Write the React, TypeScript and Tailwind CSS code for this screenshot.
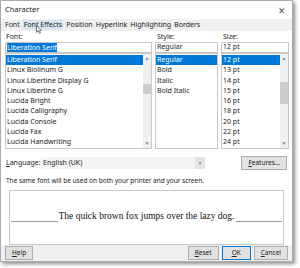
const fonts = [
  "Liberation Serif",
  "Linux Biolinum G",
  "Linux Libertine Display G",
  "Linux Libertine G",
  "Lucida Bright",
  "Lucida Calligraphy",
  "Lucida Console",
  "Lucida Fax",
  "Lucida Handwriting",
  "Lucida Sans",
];
const styles = ["Regular", "Bold", "Italic", "Bold Italic"];
const sizes = ["12 pt", "13 pt", "14 pt", "15 pt", "16 pt", "18 pt", "20 pt", "22 pt", "24 pt", "26 pt"];

function ScrollBar({ thumbTop, thumbH }: { thumbTop: number; thumbH: number }) {
  return (
    <div className="relative flex w-[8px] shrink-0 flex-col items-center justify-between bg-[#f0f0f0] py-[2px] text-[5px] leading-none text-[#888]">
      <span>▲</span>
      <div
        className="absolute left-0 w-[8px] bg-[#cdcdcd]"
        style={{ top: thumbTop, height: thumbH }}
      />
      <span>▼</span>
    </div>
  );
}

function ListBox({
  items,
  width,
  scroll,
}: {
  items: string[];
  width: string;
  scroll?: { top: number; h: number };
}) {
  return (
    <div className={`flex h-[96px] overflow-hidden border border-[#c8c8c8] bg-white ${width}`}>
      <div className="flex min-w-0 flex-1 flex-col pt-[1px]">
        {items.map((it, i) => (
          <div
            key={it}
            className={`h-[10.3px] shrink-0 whitespace-nowrap pl-[1px] leading-[10px] ${
              i === 0 ? "bg-[#0078d7] text-white" : "text-[#222]"
            }`}
          >
            {it}
          </div>
        ))}
      </div>
      {scroll && <ScrollBar thumbTop={scroll.top} thumbH={scroll.h} />}
    </div>
  );
}

function Btn({ children, focus }: { children: React.ReactNode; focus?: boolean }) {
  return (
    <div
      className={`flex h-[14px] items-center justify-center border bg-[#e1e1e1] px-[6px] text-[6.5px] leading-[10px] text-[#222] ${
        focus ? "border-[#0078d7]" : "border-[#adadad]"
      }`}
    >
      {children}
    </div>
  );
}

export default function App() {
  return (
    <div
      className="h-[268px] w-[300px] overflow-hidden bg-white"
      style={{ fontFamily: '"Noto Sans", "Open Sans", sans-serif' }}
    >
      <div className="flex h-[262px] w-[293px] flex-col overflow-hidden border border-[#aaa] bg-white text-[7px] shadow-[2px_2px_4px_rgba(0,0,0,0.45)]">
        {/* title */}
        <div className="flex h-[18px] shrink-0 items-center justify-between pl-[4px] pr-[6px] text-[7.5px] text-[#222]">
          <span>Character</span>
          <span className="text-[9px] leading-none text-[#555]">✕</span>
        </div>
        {/* tabs */}
        <div className="flex h-[12px] shrink-0 items-center gap-[3px] bg-[#f0f0f0] pl-[4px] text-[7px] text-[#222]">
          <span>Font</span>
          <span className="relative bg-[#d8e6f2] px-[1px]">
            Font Effects
            <svg
              className="absolute left-[13px] top-[5px]"
              width="6"
              height="9"
              viewBox="0 0 6 9"
            >
              <path d="M0.5 0.5 L0.5 7.5 L2.2 5.8 L3.4 8.5 L4.4 8 L3.3 5.4 L5.5 5.4 Z" fill="#fff" stroke="#333" strokeWidth="0.6" />
            </svg>
          </span>
          <span>Position</span>
          <span>Hyperlink</span>
          <span>Highlighting</span>
          <span>Borders</span>
        </div>
        {/* page */}
        <div className="flex h-[214px] shrink-0 flex-col px-[4px] pt-[1px]">
          <div className="flex gap-[3px]">
            <div className="flex flex-col">
              <div className="h-[10px] pl-[1px] leading-[10px] text-[#222]">Font:</div>
              <div className="flex h-[11px] w-[147px] items-center border border-[#c8c8c8] bg-white pl-[1px]">
                <span className="bg-[#0078d7] leading-[9px] text-white">Liberation Serif</span>
              </div>
              <ListBox items={fonts} width="w-[147px]" scroll={{ top: 30, h: 10 }} />
            </div>
            <div className="flex flex-col">
              <div className="h-[10px] pl-[2px] leading-[10px] text-[#222]">Style:</div>
              <div className="flex h-[11px] w-[63px] items-center border border-[#c8c8c8] bg-white pl-[1px] text-[#222]">
                Regular
              </div>
              <ListBox items={styles} width="w-[63px]" />
            </div>
            <div className="flex flex-col">
              <div className="h-[10px] pl-[2px] leading-[10px] text-[#222]">Size:</div>
              <div className="flex h-[11px] w-[68px] items-center border border-[#c8c8c8] bg-white pl-[1px] text-[#222]">
                12 pt
              </div>
              <ListBox items={sizes} width="w-[68px]" scroll={{ top: 28, h: 22 }} />
            </div>
          </div>
          {/* language */}
          <div className="mt-[7px] flex h-[14px] items-center">
            <span className="w-[36px] pl-[1px] leading-[10px] text-[#222]">
              <span className="underline">L</span>anguage:
            </span>
            <div className="flex h-[12px] w-[164px] items-center justify-between bg-[#f4f4f4] pl-[2px] leading-[10px] text-[#222]">
              <span>English (UK)</span>
              <span className="flex h-[12px] w-[10px] items-center justify-center bg-[#e5e5e5] text-[5px] text-[#888]">
                ▼
              </span>
            </div>
            <div className="ml-auto mr-[1px]">
              <Btn>
                <span className="underline">F</span>eatures...
              </Btn>
            </div>
          </div>
          <div className="mt-[6px] h-[10px] pl-[1px] text-[6.5px] leading-[10px] text-[#222]">
            The same font will be used on both your printer and your screen.
          </div>
          {/* preview */}
          <div className="mx-[4px] mt-[4px] flex h-[55px] items-center border border-[#c8c8c8] bg-white">
            <div className="flex w-full items-end gap-[1px] px-[1px] pb-[2px]">
              <div className="mb-[2px] h-px flex-1 bg-[#999]" />
              <span
                className="whitespace-nowrap text-[9.5px] text-[#111]"
                style={{ fontFamily: '"Liberation Serif", serif' }}
              >
                The quick brown fox jumps over the lazy dog.
              </span>
              <div className="mb-[2px] h-px flex-1 bg-[#999]" />
            </div>
          </div>
        </div>
        {/* buttons */}
        <div className="flex h-[16px] shrink-0 items-start gap-[3px] bg-[#f0f0f0] px-[4px] pt-[1px]">
          <Btn>
            <span className="underline">H</span>elp
          </Btn>
          <div className="ml-auto" />
          <Btn>
            <span className="underline">R</span>eset
          </Btn>
          <Btn focus>
            <span className="px-[3px]">
              <span className="underline">O</span>K
            </span>
          </Btn>
          <Btn>
            <span className="underline">C</span>ancel
          </Btn>
        </div>
      </div>
    </div>
  );
}
